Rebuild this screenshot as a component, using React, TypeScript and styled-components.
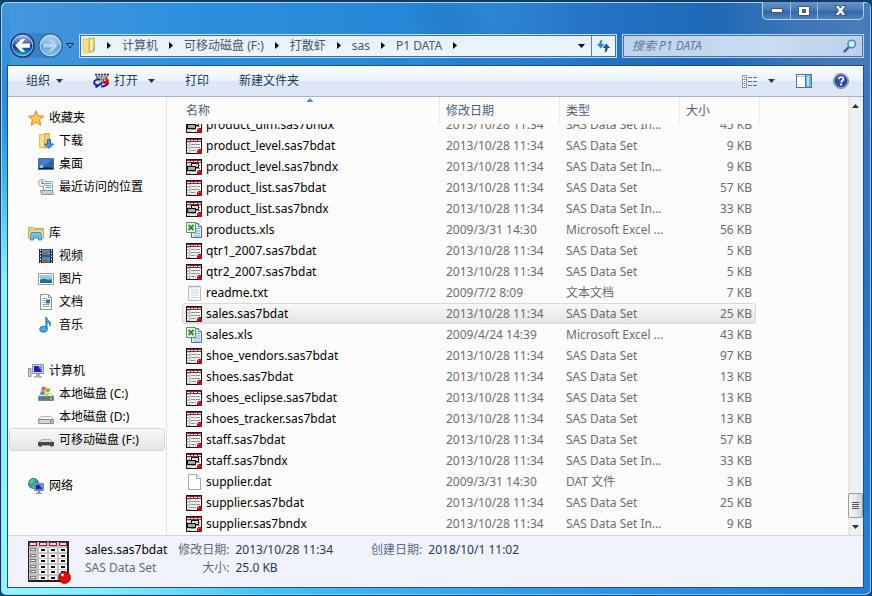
import React from "react";
import styled, { createGlobalStyle, css } from "styled-components";

const GlobalStyle = createGlobalStyle`
  *, *::before, *::after { box-sizing: border-box; }
  html, body { margin: 0; background: #0c4577; }
  body, button, input {
    font-family: "Noto Sans", "Noto Sans CJK SC", sans-serif;
    font-size: 12px;
    line-height: 16px;
  }
  button { margin: 0; padding: 0; border: 0; background: none; color: inherit; }
  svg { display: block; flex: none; }
`;

/* ---------- window frame ---------- */

const Window = styled.div`
  height: 100vh;
  display: flex;
  flex-direction: column;
  padding: 0 7px 7px 6px;
  overflow: hidden;
  border: 1px solid #123a66;
  border-top-width: 2px;
  border-radius: 7px 7px 6px 6px;
  box-shadow: inset 1px 1px 0 #a8d4f4, inset -1px -1px 0 #8ccdf6;
  background:
    linear-gradient(90deg, #8ff7fb 0, #7ef0fc 12%, #44c2fb 30%, #2f9df2 60%, #1c7ee0 100%) bottom / 100% 9px no-repeat,
    linear-gradient(180deg, #3f97dd 0, #2f8bdc 90px, #2f96e4 130px, #44bdf0 190px, #8cf2f8 280px, #8df8fb 100%) left / 9px 100% no-repeat,
    linear-gradient(180deg, #4a7cb8 0, #3a75c2 100px, #2272cc 50%, #1c80e4 100%) right / 9px 100% no-repeat,
    linear-gradient(65deg, transparent 47%, rgba(10, 70, 150, 0.14) 52%, transparent 60%) top / 100% 66px no-repeat,
    linear-gradient(90deg, #4597dc 0, #3a92dc 12%, #2f90e0 20%, #2687d8 46%, #2f87d6 56%, #2473c6 68%, #1f69b6 82%, #3f76b8 92%, #4a7cb8 100%);
`;

const CaptionBar = styled.header`
  display: flex;
  justify-content: flex-end;
  height: 18px;
  flex: none;
`;

const CaptionButtons = styled.div`
  display: flex;
  border: 1px solid #b9d0ea;
  border-top: 0;
  border-radius: 0 0 5px 5px;
  background: linear-gradient(#6a96c8, #4076b5 50%, #2f66a8 52%, #4d82bd);
  overflow: hidden;
`;

const CaptionButton = styled.button<{ $wide?: boolean }>`
  display: grid;
  place-items: center;
  width: ${(p) => (p.$wide ? 46 : 27)}px;
  & + & { border-left: 1px solid #9bbbe0; }
`;

const NavRow = styled.nav`
  display: flex;
  align-items: center;
  gap: 5px;
  flex: none;
  height: 45px;
  padding: 6px 0 0 3px;
`;

const Travel = styled.div`
  display: flex;
  align-items: center;
  gap: 3px;
`;

const TravelPill = styled.div`
  display: flex;
  gap: 3px;
  border-radius: 13px;
  background: rgba(20, 80, 140, 0.25);
`;

const AddressBar = styled.div`
  flex: 1;
  min-width: 0;
  height: 24px;
  display: flex;
  align-items: stretch;
  border: 1px solid #c3dff5;
  outline: 1px solid #3d6f9d;
  outline-offset: -2px;
  background: linear-gradient(#e4f0fa, #edf6fd);
  padding: 0 1px 0 2px;
  color: #4a5865;
`;

const Crumbs = styled.ol`
  flex: 1;
  display: flex;
  align-items: center;
  gap: 11px;
  margin: 0;
  padding: 0;
  list-style: none;
  white-space: nowrap;
`;

const Crumb = styled.li`
  display: flex;
  align-items: center;
  gap: 11px;
`;

const AddressButton = styled.button<{ $divided?: boolean }>`
  width: ${(p) => (p.$divided ? 24 : 20)}px;
  display: grid;
  place-items: center;
  ${(p) => p.$divided && css`border-left: 1px solid #5483ad;`}
`;

const SearchBox = styled.label`
  width: 242px;
  height: 24px;
  display: flex;
  align-items: center;
  padding: 0 6px 0 9px;
  border: 1px solid #b7d0ea;
  outline: 1px solid #49729c;
  outline-offset: -2px;
  background: linear-gradient(90deg, #bcd4ee, #c9dcf1 60%, #bed1e8);
`;

const SearchInput = styled.input`
  flex: 1;
  min-width: 0;
  padding: 0;
  border: 0;
  outline: 0;
  background: transparent;
  font-style: italic;
  &::placeholder { color: #64788f; opacity: 1; }
`;

/* ---------- client area ---------- */

const Client = styled.main`
  flex: 1;
  min-height: 0;
  display: flex;
  flex-direction: column;
  border: 1px solid #1d4f80;
  background: #fcfcfc;
`;

const Toolbar = styled.div`
  flex: none;
  height: 31px;
  display: flex;
  align-items: center;
  justify-content: space-between;
  padding: 0 14px 0 18px;
  border-bottom: 1px solid #a3b4c8;
  background: linear-gradient(#fafcff 0, #edf3fb 48%, #dce6f4 50%, #dde7f5 100%);
  color: #1e395b;
`;

const ToolGroup = styled.div<{ $gap: number }>`
  display: flex;
  align-items: center;
  gap: ${(p) => p.$gap}px;
`;

const ToolButton = styled.button<{ $gap?: number }>`
  display: flex;
  align-items: center;
  gap: ${(p) => p.$gap ?? 6}px;
  white-space: nowrap;
`;

const Body = styled.div`
  flex: 1;
  min-height: 0;
  display: flex;
`;

const Sidebar = styled.aside`
  width: 159px;
  flex: none;
  padding: 9px 1px 0;
  display: flex;
  flex-direction: column;
  gap: 23px;
  border-right: 1px solid #d9e3f1;
`;

const TreeGroup = styled.div`
  display: flex;
  flex-direction: column;
`;

const TreeItem = styled.a<{ $child?: boolean; $active?: boolean }>`
  display: flex;
  align-items: center;
  gap: 5px;
  height: 23px;
  padding-left: ${(p) => (p.$child ? 28 : 18)}px;
  border: 1px solid transparent;
  border-radius: 3px;
  color: #000;
  text-decoration: none;
  white-space: nowrap;
  ${(p) =>
    p.$active &&
    css`
      border-color: #d6d6d6;
      background: linear-gradient(#f9f9f9, #e4e4e4);
    `}
`;

const columns = css`
  display: grid;
  align-items: center;
`;

const FileTable = styled.table`
  flex: 1;
  min-width: 0;
  display: flex;
  flex-direction: column;
  border-spacing: 0;
`;

const TableHead = styled.thead`
  display: block;
  flex: none;
`;

const HeadRow = styled.tr`
  ${columns}
  grid-template-columns: 260px 120px 120px 80px;
  height: 27px;
  margin-left: 13px;
`;

const HeadCell = styled.th`
  position: relative;
  height: 100%;
  padding: 6px 6px 0;
  border-right: 1px solid #e2edf8;
  font-weight: 400;
  text-align: left;
  color: #4c607a;
`;

const SortMark = styled.svg`
  position: absolute;
  top: 1px;
  left: 50%;
  transform: translateX(-50%);
`;

const TableBody = styled.tbody`
  flex: 1;
  min-height: 0;
  display: flex;
  flex-direction: column;
  justify-content: flex-end;
  overflow: hidden;
  padding-bottom: 1px;
`;

const FileRow = styled.tr<{ $active?: boolean }>`
  ${columns}
  flex: none;
  grid-template-columns: 256px 120px 120px 76px;
  width: 574px;
  height: 21px;
  margin-left: 15px;
  border: 1px solid transparent;
  border-radius: 3px;
  ${(p) =>
    p.$active &&
    css`
      border-color: #d9d9d9;
      background: linear-gradient(#f8f8f8, #e5e5e5);
    `}
`;

const Cell = styled.td<{ $right?: boolean }>`
  padding: 0 ${(p) => (p.$right ? 3 : 0)}px 0 7px;
  color: #6d6d6d;
  text-align: ${(p) => (p.$right ? "right" : "left")};
  white-space: nowrap;
`;

const NameCell = styled(Cell)`
  display: flex;
  align-items: center;
  gap: 4px;
  padding-left: 3px;
  color: #000;
`;

const ScrollTrack = styled.div`
  width: 15px;
  flex: none;
  display: flex;
  flex-direction: column;
  justify-content: space-between;
  align-items: stretch;
  background: linear-gradient(90deg, #e7e7e7, #f1f1f1 30%, #efefef);
`;

const ScrollButton = styled.button`
  height: 17px;
  display: grid;
  place-items: center;
`;

const ScrollThumb = styled.button`
  height: 25px;
  display: grid;
  place-items: center;
  border: 1px solid #9a9a9a;
  border-radius: 2px;
  background: linear-gradient(90deg, #f7f7f7, #e8e8ea 50%, #cfd0d4);
`;

const ScrollEnd = styled.div`
  display: flex;
  flex-direction: column;
`;

const Details = styled.footer`
  flex: none;
  height: 52px;
  display: flex;
  align-items: center;
  gap: 14px;
  padding: 0 18px 0 19px;
  border-top: 1px solid #ccd9ea;
  background: #f0f3fb;
  color: #1e395b;
`;

const DetailBlocks = styled.div`
  display: flex;
  gap: 11px;
  padding-bottom: 6px;
  white-space: nowrap;
`;

const Lines = styled.div`
  display: grid;
  grid-auto-rows: 18px;
  align-items: center;
  align-content: start;
  color: #5a6b85;
`;

const DetailName = styled.strong`
  font-weight: 400;
  color: #000;
`;

const Meta = styled.dl<{ $spaced?: boolean }>`
  display: grid;
  grid-template-columns: auto auto;
  grid-auto-rows: 18px;
  align-items: center;
  column-gap: 6px;
  margin: 0 0 0 ${(p) => (p.$spaced ? 27 : 0)}px;
  dt { text-align: right; color: #5a6b85; }
  dd { margin: 0; }
`;

/* ---------- drawings ---------- */

const Down = ({ color = "#1e395b" }: { color?: string }) => (
  <svg width="7" height="4" viewBox="0 0 7 4"><path d="M0 0h7L3.5 4z" fill={color} /></svg>
);

const CrumbArrow = () => (
  <svg width="4" height="7" viewBox="0 0 4 7"><path d="M0 0v7l4-3.500z" fill="#000" /></svg>
);

const TravelIcon = ({ back }: { back?: boolean }) => {
  const id = back ? "orbBack" : "orbForward";
  return (
    <svg width="25" height="25" viewBox="0 0 25 25">
      <defs>
        <linearGradient id={id} x1="0" y1="0" x2="0" y2="1">
          <stop offset="0" stopColor={back ? "#b6c8e6" : "#b4d3ec"} />
          <stop offset=".45" stopColor={back ? "#2f60ad" : "#86b7e0"} />
          <stop offset=".5" stopColor={back ? "#0a2f84" : "#5f9fd5"} />
          <stop offset="1" stopColor={back ? "#23b6f2" : "#8bc6ec"} />
        </linearGradient>
      </defs>
      <circle cx="12.500" cy="12.500" r="11.500" fill={`url(#${id})`} stroke={back ? "#16396d" : "#386c9e"} strokeWidth="1.500" />
      <circle cx="12.500" cy="12.500" r="10.300" fill="none" stroke="#d5ebfa" strokeOpacity=".7" />
      <g transform={back ? undefined : "translate(25 0) scale(-1 1)"}>
        <path d="M5.500 12.500 11.500 6.500h3L10.700 11H19.500v3.200H10.700l3.800 4.300h-3z" fill={back ? "#fff" : "#b6d8f1"} stroke={back ? "#fff" : "#9cc8ea"} strokeWidth={back ? "1" : ".5"} />
      </g>
    </svg>
  );
};

const FolderIcon = () => (
  <svg width="14" height="17" viewBox="0 0 14 17">
    <path d="M1 2h6v13l-1 1H1z" fill="#f5df83" stroke="#d8bd62" strokeWidth=".7" />
    <path d="M7 1h5.500v13L7 16z" fill="#e9c95f" stroke="#cdb052" strokeWidth=".7" />
    <path d="M8 2.500h3v10l-3 1.300z" fill="#f9edb0" /><path d="M11.500 10h1.500v4h-1.500z" fill="#86a9c5" />
  </svg>
);

const RefreshIcon = () => (
  <svg width="15" height="14" viewBox="0 0 15 14">
    <path d="M6.500.5C4.200 1 3.300 2.500 3.300 5H.8l3.900 4.500L8.500 5H5.800c0-2 .2-3 .7-4.500z" fill="#2f87c6" />
    <path d="M8.500 13.500c2.300-.5 3.200-2 3.200-4.500h2.500l-3.900-4.500L6.500 9h2.700c0 2-.2 3-.7 4.500z" fill="#1c5599" />
  </svg>
);

const SearchIcon = () => (
  <svg width="14" height="14" viewBox="0 0 14 14" fill="none">
    <path d="M1.500 12.500 6 8" stroke="#2d62a5" strokeWidth="2.300" strokeLinecap="round" />
    <circle cx="8.700" cy="5" r="3.800" fill="#dcebfa" stroke="#3b8fd0" strokeWidth="1.600" />
  </svg>
);

const OpenSasIcon = () => (
  <svg width="17" height="16" viewBox="0 0 17 16">
    <path d="M2.500 1.500h12.500l-2 9H6z" fill="#c4c4c4" />
    <path d="M2 1.500h14" stroke="#222" strokeWidth="1.500" strokeDasharray="2 1" />
    <path d="M4 4h9M5 6.500h7M8.500 2v8" stroke="#8a8a8a" />
    <path d="M14.500 2.500l-1 3M3 3l1.500 3" stroke="#444" />
    <path d="M7 6.500C3 6 .8 8 1.200 10c.6 3 5.800 2.500 8 .2M2.500 14.500l7-5" fill="none" stroke="#1618c4" strokeWidth="1.800" />
    <path d="M8 13.500c3 0 6-1 7.500-4" fill="none" stroke="#101080" strokeWidth="1.700" />
    <circle cx="12.800" cy="8.200" r="3" fill="#d40c0c" /><circle cx="11.900" cy="7.200" r=".9" fill="#fff" />
  </svg>
);

const ViewIcon = () => (
  <svg width="16" height="13" viewBox="0 0 16 13" shapeRendering="crispEdges">
    {[0, 4, 8].map((y) => (
      <g key={y}>
        <path d={`M.5 ${y + 0.5}h4v4h-4z`} fill="#fff" stroke="#8796a8" />
        <path d={`M2 ${y + 2}h1v1H2z`} fill="#4b6a8e" />
        <path d={`M6 ${y + 2.5}h4M11 ${y + 2.5}h4`} stroke="#5d728d" />
      </g>
    ))}
  </svg>
);

const PaneIcon = () => (
  <svg width="16" height="14" viewBox="0 0 16 14" shapeRendering="crispEdges">
    <path d="M.5.5h15v13H.5z" fill="#fff" stroke="#477a8e" />
    <path d="M1 2.500h9" stroke="#b5ccd6" /><path d="M10 1h5v12h-5z" fill="#6dbbd2" />
    <path d="M9.500 1v12" stroke="#477a8e" /><path d="M11 2h2v10h-2z" fill="#b5e2ee" />
  </svg>
);

const HelpIcon = () => (
  <svg width="16" height="16" viewBox="0 0 16 16" fill="none">
    <circle cx="8" cy="8" r="7.500" fill="#d4d9e3" stroke="#7c8594" />
    <circle cx="8" cy="8" r="6" fill="#2852b4" stroke="#173483" />
    <path d="M5.700 6.300c0-3 4.700-3 4.700-.2 0 1.700-2.200 1.600-2.200 3.300" stroke="#fff" strokeWidth="1.700" />
    <circle cx="8.100" cy="11.600" r="1.100" fill="#fff" />
  </svg>
);

const SasIcon = ({ index }: { index?: boolean }) => (
  <svg width="16" height="16" viewBox="0 0 16 16" shapeRendering="crispEdges">
    <path d="M0 0h16v16H0z" fill="#151515" /><path d="M1 1h14v14H1z" fill="#fafafa" />
    <path d="M1 1h14v3H1z" fill="#9c2233" /><path d="M1 2h3v1H1zM5 2h2v1H5zM8 2h3v1H8zM12 2h3v1h-3z" fill="#fff" />
    <path d="M1 4h3v11H1z" fill="#c4c4c4" />
    <path d="M1 5h2v1H1zM1 8h2v1H1zM1 11h2v1H1zM1 13h2v1H1z" fill="#fff" />
    <path d="M5 6h4v1H5zM10 6h4v1h-4zM5 9h4v1H5zM10 9h4v1h-4zM5 12h4v1H5z" fill="#8e8e8e" />
    <path d="M4 4h1v11H4zM9 4h1v11H9z" fill="#d4d4d4" />
    {index && (
      <>
        <path d="M5 4h8v5H5z" fill="#111" /><path d="M6 5h6v3H6z" fill="#dedede" />
        <path d="M1 7h9v5H1z" fill="#111" /><path d="M2 8h7v3H2z" fill="#a9a9a9" />
      </>
    )}
    <path d="M12 11h3v1h1v4h-4v-1h-1v-3h1z" fill="#c00c18" /><path d="M12 12h1v1h-1z" fill="#ff9a9a" />
  </svg>
);

const ExcelIcon = () => (
  <svg width="16" height="16" viewBox="0 0 16 16">
    <path d="M5.500 1.500h7l3 3v11h-10z" fill="#dbe8fa" stroke="#4b72ad" />
    <path d="M8 6.500h6M8 9h6M8 11.500h6M8 14h6" stroke="#8dafdc" />
    <path d="M12.500 1.500v3h3" fill="#fff" stroke="#4b72ad" />
    <path d="M.5.500h9v10h-9z" fill="#e9f5e4" stroke="#5a9b54" />
    <path d="M2.500 3l5 5M7.500 3l-5 5" stroke="#2b8a2e" strokeWidth="1.800" />
  </svg>
);

const TextIcon = () => (
  <svg width="16" height="16" viewBox="0 0 16 16">
    <path d="M2.500 1.500h12v14h-12z" fill="#f7fafb" stroke="#b4bdc2" />
    <path d="M3 1.500h11" stroke="#a9b2b7" strokeDasharray="1 1" strokeWidth="2" />
    <path d="M4.500 5h8M4.500 7.500h8M4.500 10h8M4.500 12.500h8" stroke="#c6d6dd" />
  </svg>
);

const BlankIcon = () => (
  <svg width="16" height="16" viewBox="0 0 16 16">
    <path d="M2.500.500h8.500l3.500 3.500v11.500h-12z" fill="#fdfdfd" stroke="#a7a7a7" /><path d="M10.500.500v4h4" fill="#eee" stroke="#a7a7a7" />
  </svg>
);

const LargeSasIcon = () => (
  <svg width="44" height="44" viewBox="0 0 44 44" shapeRendering="crispEdges">
    <path d="M1 1h41v41H1z" fill="#222" /><path d="M2 2h38v38H2z" fill="#c2c2c2" />
    {[2, 12, 22, 32].map((x) => (
      <path key={x} d={`M${x + 0.5} 2.500h7v3h-7z`} fill="#f4dfe1" stroke="#a01e30" />
    ))}
    {[8, 14, 19, 25, 30, 36].map((y) => (
      <g key={y}>
        <path d={`M3.500 ${y + 0.5}h5v2h-5z`} fill="#fff" stroke="#777" />
        {[12, 22, 32].map((x) => (
          <g key={x}>
            <path d={`M${x} ${y}h8v4h-8z`} fill="#fff" />
            <path d={`M${x + 2} ${y + 1}h4v2h-4z`} fill="#111" />
          </g>
        ))}
      </g>
    ))}
    <g shapeRendering="auto"><circle cx="37.500" cy="37.500" r="6" fill="#dd0808" stroke="#8e0000" strokeWidth=".7" /><circle cx="35.500" cy="35" r="1.400" fill="#fff" /></g>
  </svg>
);

const Drive = ({ dark }: { dark?: boolean }) => (
  <>
    <path d="M3.500 7.500h9l3 3H.5z" fill={dark ? "#d8d8d8" : "#f5f5f5"} stroke="#999" strokeWidth=".7" />
    <path d={dark ? "M.5 10.500h15v3l-2 1-2-1.500h-7l-2 1.500-2-1z" : "M.5 10.500h15v4h-15z"} fill={dark ? "#4b4b4b" : "#d5d7d8"} stroke={dark ? "#333" : "#777"} strokeWidth=".8" />
    {!dark && <path d="M12 11.500h2v2h-2z" fill="#4bb52a" />}
  </>
);

const sideDrawings: Record<string, React.ReactNode> = {
  star: <path d="M8 .8l2.200 5 5.300.4-4 3.500 1.300 5.500L8 12.300l-4.800 2.900 1.300-5.500-4-3.500 5.300-.4z" fill="#ffc64d" stroke="#de8324" />,
  download: (
    <>
      <path d="M1.500 1.500h5v13h-5z" fill="#f4df8b" stroke="#d8bd6b" /><path d="M6.500.500h5v13l-5 2z" fill="#ecd06d" stroke="#d0b25c" />
      <path d="M9.500 6.500h3v4.500h3L11 15.500 6.500 11h3z" fill="#3b9be3" stroke="#2467a7" />
    </>
  ),
  desktop: (
    <>
      <path d="M.5 2.500h15v11H.5z" fill="#2862b8" stroke="#5c6b7d" /><path d="M1 3h14L4 12H1z" fill="#5793dc" opacity=".6" />
      <path d="M1 11.500h14V13H1z" fill="#122347" /><path d="M2 9h3v3H2z" fill="#7fc7ef" />
    </>
  ),
  recent: (
    <>
      <path d="M5.500 2.500h9v9h-9z" fill="#eef4f8" stroke="#98a4ae" /><path d="M8 4.500h5M8 6.500h5M8 8.500h5" stroke="#5e9bd2" />
      <path d="M2.500 11.500h12l1 4h-12z" fill="#c9ced2" stroke="#8d969e" /><circle cx="4" cy="4" r="3.500" fill="#f6f6f6" stroke="#98a1a8" />
      <path d="M4 2v2.500h2" fill="none" stroke="#4b5866" />
    </>
  ),
  library: (
    <>
      <path d="M.5 2.500h5l1 1h9v10H.5z" fill="#f1dc8b" stroke="#c9aa53" /><path d="M1 5h14" stroke="#c7b060" />
      <path d="M2.500 15v-4.500l1-3h9l1 3V15h-3v-3h-5v3z" fill="#77c1e8" stroke="#3f8fc4" />
    </>
  ),
  video: (
    <>
      <path d="M1 1h14v14H1z" fill="#222b33" /><path d="M4 1.500h8v6H4zM4 8.500h8v6H4z" fill="#3c90cf" />
      <path d="M5 6l3-3 3 4H4zM5 13l3-3 3 4H4z" fill="#a65b34" /><path d="M2.500 1.500v13M13.500 1.500v13" stroke="#fff" strokeDasharray="1.500 1.500" />
    </>
  ),
  picture: (
    <>
      <path d="M.5 2.500h15v11H.5z" fill="#fff" stroke="#9099a2" /><path d="M2 4h12v8H2z" fill="#8cd1ef" />
      <path d="M2 9c4-3 7 1 12-1v4H2z" fill="#287c68" /><path d="M2 10.500h12V12H2z" fill="#1f5f94" />
    </>
  ),
  document: (
    <>
      <path d="M2.500.500h8l3 3v12h-11z" fill="#fff" stroke="#8593a3" /><path d="M10.500.500v3h3" fill="none" stroke="#8593a3" />
      <path d="M4.500 4.500h4M4.500 6.500h3M4.500 8.500h3M4.500 10.500h7M4.500 12.500h7" stroke="#8ba4bf" /><path d="M8 5.500h4v4H8z" fill="#356fae" />
    </>
  ),
  music: (
    <>
      <path d="M8.500 1v11" stroke="#2f7fc3" strokeWidth="2" /><path d="M8 0c1 4 6 4 4 9 0-3-2-4-4-4z" fill="#4ba1df" stroke="#2f7fc3" />
      <ellipse cx="5.500" cy="12.200" rx="3.800" ry="3" fill="#4aa6e6" stroke="#2476b8" />
    </>
  ),
  computer: (
    <>
      <path d="M.5 5.500h2.500v8H.5z" fill="#d2d6d8" stroke="#878f95" /><path d="M4.500 1.500h11v9h-11z" fill="#cfd5da" stroke="#8d959c" />
      <path d="M6 3h8v6H6z" fill="#1322c0" /><path d="M10 3h4v6z" fill="#6f92f0" /><path d="M8 11h4v2h2v1.500H6V13h2z" fill="#a5adb3" />
    </>
  ),
  system: (
    <>
      <Drive /><path d="M1 10.500h14.500v4H1z" fill="#517d91" /><path d="M12 11.500h2v2h-2z" fill="#7bdc54" />
      <path d="M4 1.500c1.500-1 2.500-1 4 0L7 5c-1.500-1-2.500-1-4 0z" fill="#e65a25" /><path d="M8.500 2c1.500 1 2.500 1 4 0l-1 3.500c-1.500 1-2.500 1-4 0z" fill="#7db92e" />
      <path d="M2.800 5.700c1.500-1 2.500-1 4 0l-1 3.500c-1.500-1-2.500-1-4 0z" fill="#378bd9" /><path d="M7.300 6.200c1.500 1 2.500 1 4 0l-1 3.500c-1.500 1-2.500 1-4 0z" fill="#f7c52d" />
    </>
  ),
  drive: <Drive />,
  removable: <Drive dark />,
  network: (
    <>
      <circle cx="5.500" cy="5.500" r="5" fill="#2f93cf" stroke="#2274a4" /><path d="M2 3c2-3 4-2 5-1L5 5 3 6 1 5zM4 7l3 1-2 3z" fill="#5ccf55" />
      <path d="M6.500 5.500h9v7h-9z" fill="#d6dade" stroke="#7c868f" /><path d="M7.500 6.500h7v5h-7z" fill="#1322c0" /><path d="M11 6.500h3.500v5z" fill="#6f92f0" />
      <path d="M10 13h2v1.500h2V16H8v-1.500h2z" fill="#8c969f" />
    </>
  ),
};

const SideIcon = ({ kind }: { kind: string }) => (
  <svg width="16" height="16" viewBox="0 0 16 16">{sideDrawings[kind]}</svg>
);

/* ---------- data ---------- */

const tree: [string, string][][] = [
  [["star", "收藏夹"], ["download", "下载"], ["desktop", "桌面"], ["recent", "最近访问的位置"]],
  [["library", "库"], ["video", "视频"], ["picture", "图片"], ["document", "文档"], ["music", "音乐"]],
  [["computer", "计算机"], ["system", "本地磁盘 (C:)"], ["drive", "本地磁盘 (D:)"], ["removable", "可移动磁盘 (F:)"]],
  [["network", "网络"]],
];

type Kind = "data" | "index" | "excel" | "text" | "dat";

const kinds: Record<Kind, { label: string; icon: React.ReactNode }> = {
  data: { label: "SAS Data Set", icon: <SasIcon /> },
  index: { label: "SAS Data Set In...", icon: <SasIcon index /> },
  excel: { label: "Microsoft Excel ...", icon: <ExcelIcon /> },
  text: { label: "文本文档", icon: <TextIcon /> },
  dat: { label: "DAT 文件", icon: <BlankIcon /> },
};

const T = "2013/10/28 11:34";
const files: [string, string, Kind, number][] = [
  ["product_dim.sas7bndx", T, "index", 45],
  ["product_level.sas7bdat", T, "data", 9],
  ["product_level.sas7bndx", T, "index", 9],
  ["product_list.sas7bdat", T, "data", 57],
  ["product_list.sas7bndx", T, "index", 33],
  ["products.xls", "2009/3/31 14:30", "excel", 56],
  ["qtr1_2007.sas7bdat", T, "data", 5],
  ["qtr2_2007.sas7bdat", T, "data", 5],
  ["readme.txt", "2009/7/2 8:09", "text", 7],
  ["sales.sas7bdat", T, "data", 25],
  ["sales.xls", "2009/4/24 14:39", "excel", 43],
  ["shoe_vendors.sas7bdat", T, "data", 97],
  ["shoes.sas7bdat", T, "data", 13],
  ["shoes_eclipse.sas7bdat", T, "data", 13],
  ["shoes_tracker.sas7bdat", T, "data", 13],
  ["staff.sas7bdat", T, "data", 57],
  ["staff.sas7bndx", T, "index", 33],
  ["supplier.dat", "2009/3/31 14:30", "dat", 3],
  ["supplier.sas7bdat", T, "data", 25],
  ["supplier.sas7bndx", T, "index", 9],
];

const crumbs = ["计算机", "可移动磁盘 (F:)", "打散虾", "sas", "P1 DATA"];

export default function App() {
  return (
    <>
      <GlobalStyle />
      <Window>
        <CaptionBar>
          <CaptionButtons>
            <CaptionButton aria-label="最小化">
              <svg width="12" height="5" viewBox="0 0 12 5"><path d="M.5.500h11v4H.5z" fill="#fff" stroke="#44546b" /></svg>
            </CaptionButton>
            <CaptionButton aria-label="最大化">
              <svg width="12" height="10" viewBox="0 0 12 10"><path d="M.5.500h11v9H.5zM4.500 3.500v3h3v-3z" fill="#fff" fillRule="evenodd" stroke="#44546b" /></svg>
            </CaptionButton>
            <CaptionButton $wide aria-label="关闭">
              <svg width="13" height="11" viewBox="0 0 13 11"><path d="M1 .500h3.500l2 2.500 2-2.500H12L8.500 5.500 12 10.500H8.500l-2-2.500-2 2.500H1l3.500-5z" fill="#fff" stroke="#44546b" /></svg>
            </CaptionButton>
          </CaptionButtons>
        </CaptionBar>

        <NavRow>
          <Travel>
            <TravelPill>
              <button aria-label="后退"><TravelIcon back /></button>
              <button aria-label="前进"><TravelIcon /></button>
            </TravelPill>
            <button aria-label="最近的页面">
              <svg width="8" height="6" viewBox="0 0 8 6"><path d="M.5.500h7L4 5z" fill="#4d97d6" stroke="#0e3766" /></svg>
            </button>
          </Travel>
          <AddressBar>
            <Crumbs>
              <Crumb><FolderIcon /><CrumbArrow /></Crumb>
              {crumbs.map((c) => (
                <Crumb key={c}><button>{c}</button><CrumbArrow /></Crumb>
              ))}
            </Crumbs>
            <AddressButton aria-label="以前的位置"><Down color="#05053c" /></AddressButton>
            <AddressButton $divided aria-label="刷新"><RefreshIcon /></AddressButton>
          </AddressBar>
          <SearchBox>
            <SearchInput type="text" aria-label="搜索 P1 DATA" placeholder="搜索 P1 DATA" />
            <SearchIcon />
          </SearchBox>
        </NavRow>

        <Client>
          <Toolbar>
            <ToolGroup $gap={30}>
              <ToolButton>组织<Down /></ToolButton>
              <ToolGroup $gap={10}>
                <ToolButton $gap={4}><OpenSasIcon />打开</ToolButton>
                <ToolButton aria-label="打开方式"><Down /></ToolButton>
              </ToolGroup>
              <ToolButton>打印</ToolButton>
              <ToolButton>新建文件夹</ToolButton>
            </ToolGroup>
            <ToolGroup $gap={21}>
              <ToolButton $gap={10} aria-label="更改视图"><ViewIcon /><Down /></ToolButton>
              <ToolButton aria-label="预览窗格"><PaneIcon /></ToolButton>
              <ToolButton aria-label="帮助"><HelpIcon /></ToolButton>
            </ToolGroup>
          </Toolbar>

          <Body>
            <Sidebar>
              {tree.map((group) => (
                <TreeGroup key={group[0][1]}>
                  {group.map(([icon, label], i) => (
                    <TreeItem key={label} href="#" $child={i > 0} $active={icon === "removable"}>
                      <SideIcon kind={icon} />{label}
                    </TreeItem>
                  ))}
                </TreeGroup>
              ))}
            </Sidebar>

            <FileTable>
              <TableHead>
                <HeadRow>
                  <HeadCell>
                    名称
                    <SortMark width="7" height="4" viewBox="0 0 7 4"><path d="M0 4 3.500 0 7 4z" fill="#5b8ba8" /></SortMark>
                  </HeadCell>
                  <HeadCell>修改日期</HeadCell>
                  <HeadCell>类型</HeadCell>
                  <HeadCell>大小</HeadCell>
                </HeadRow>
              </TableHead>
              <TableBody>
                {files.map(([name, date, kind, size]) => (
                  <FileRow key={name} $active={name === "sales.sas7bdat"}>
                    <NameCell>{kinds[kind].icon}{name}</NameCell>
                    <Cell>{date}</Cell>
                    <Cell>{kinds[kind].label}</Cell>
                    <Cell $right>{size} KB</Cell>
                  </FileRow>
                ))}
              </TableBody>
            </FileTable>

            <ScrollTrack>
              <ScrollButton aria-label="向上滚动">
                <svg width="7" height="4" viewBox="0 0 7 4"><path d="M0 4 3.500 0 7 4z" fill="#333" /></svg>
              </ScrollButton>
              <ScrollEnd>
                <ScrollThumb aria-label="滚动条">
                  <svg width="7" height="8" viewBox="0 0 7 8" shapeRendering="crispEdges"><path d="M0 .500h7M0 2.500h7M0 4.500h7M0 6.500h7" stroke="#555" /></svg>
                </ScrollThumb>
                <ScrollButton aria-label="向下滚动"><Down color="#333" /></ScrollButton>
              </ScrollEnd>
            </ScrollTrack>
          </Body>

          <Details>
            <LargeSasIcon />
            <DetailBlocks>
              <Lines><DetailName>sales.sas7bdat</DetailName><span>SAS Data Set</span></Lines>
              <Meta>
                <dt>修改日期:</dt><dd>2013/10/28 11:34</dd>
                <dt>大小:</dt><dd>25.0 KB</dd>
              </Meta>
              <Meta $spaced>
                <dt>创建日期:</dt><dd>2018/10/1 11:02</dd>
              </Meta>
            </DetailBlocks>
          </Details>
        </Client>
      </Window>
    </>
  );
}
